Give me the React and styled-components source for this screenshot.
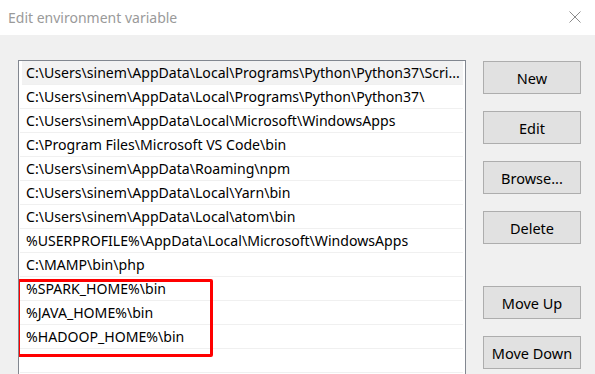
import React from "react";
import styled, { createGlobalStyle } from "styled-components";

const paths = [
	"C:\\Users\\sinem\\AppData\\Local\\Programs\\Python\\Python37\\Scri...",
	"C:\\Users\\sinem\\AppData\\Local\\Programs\\Python\\Python37\\",
	"C:\\Users\\sinem\\AppData\\Local\\Microsoft\\WindowsApps",
	"C:\\Program Files\\Microsoft VS Code\\bin",
	"C:\\Users\\sinem\\AppData\\Roaming\\npm",
	"C:\\Users\\sinem\\AppData\\Local\\Yarn\\bin",
	"C:\\Users\\sinem\\AppData\\Local\\atom\\bin",
	"%USERPROFILE%\\AppData\\Local\\Microsoft\\WindowsApps",
	"C:\\MAMP\\bin\\php",
	"%SPARK_HOME%\\bin",
	"%JAVA_HOME%\\bin",
	"%HADOOP_HOME%\\bin",
	"",
	"",
];

const App = () => {
	return (
		<>
			<Global />
			<Window>
				<TitleBar>
					<Title>Edit environment variable</Title>
					<Close aria-label="Close">
						<svg width="12" height="12" viewBox="0 0 12 12">
							<path d="M0.5 0.5 L11.5 11.5 M11.5 0.5 L0.5 11.5" stroke="#8c8c8c" strokeWidth="1" />
						</svg>
					</Close>
				</TitleBar>
				<Body>
					<ListBox>
						{paths.map((p, i) => (
							<Row key={i} $selected={i === 0}>
								{p}
							</Row>
						))}
						<Highlight />
					</ListBox>
					<Buttons>
						<Button>New</Button>
						<Button>Edit</Button>
						<Button>Browse...</Button>
						<Button>Delete</Button>
						<Button $gap={42}>Move Up</Button>
						<Button>Move Down</Button>
					</Buttons>
				</Body>
			</Window>
		</>
	);
};

export default App;

const Global = createGlobalStyle`
	html, body {
		margin: 0;
		padding: 0;
		overflow: hidden;
	}
	body {
		font-family: "Noto Sans", "Open Sans", sans-serif;
	}
`;

const Window = styled.div`
	width: 595px;
	height: 374px;
	overflow: hidden;
	background: #f0f0f0;
	display: flex;
	flex-direction: column;
`;

const TitleBar = styled.div`
	height: 35px;
	flex-shrink: 0;
	background: #fff;
	display: flex;
	align-items: center;
	justify-content: space-between;
	padding: 0 14px 1px 8px;
	box-sizing: border-box;
`;

const Title = styled.div`
	font-size: 14px;
	color: #9a9a9a;
`;

const Close = styled.div`
	display: flex;
	width: 12px;
	height: 12px;
`;

const Body = styled.div`
	display: flex;
	align-items: flex-start;
	padding: 25px 0 0 18px;
`;

const ListBox = styled.div`
	position: relative;
	width: 441px;
	height: 340px;
	border: 1px solid #828790;
	background: #fff;
	padding: 0 2px 0 3px;
	flex-shrink: 0;
	overflow: hidden;
`;

const Row = styled.div`
	height: 24px;
	line-height: 24px;
	box-sizing: border-box;
	font-size: 14.1px;
	color: #000;
	white-space: nowrap;
	background: ${(p) => (p.$selected ? "#f2f2f2" : "transparent")};
	border-bottom: 1px solid #f0f0f0;
	margin-left: ${(p) => (p.$selected ? "0" : "-2px")};
	padding-left: ${(p) => (p.$selected ? "4px" : "6px")};
`;

const Highlight = styled.div`
	position: absolute;
	left: -2px;
	top: 218px;
	width: 190px;
	height: 72px;
	border: 3px solid #ff0000;
	border-radius: 2px;
`;

const Buttons = styled.div`
	display: flex;
	flex-direction: column;
	margin-left: 17px;
	padding-top: 1px;
`;

const Button = styled.button`
	width: 98px;
	height: 33px;
	margin-top: ${(p) => (p.$gap ?? 17)}px;
	&:first-child {
		margin-top: 0;
	}
	background: #e1e1e1;
	border: 1px solid #adadad;
	border-radius: 0;
	font-family: "Noto Sans", "Open Sans", sans-serif;
	font-size: 14.5px;
	color: #000;
	padding: 0;
`;
